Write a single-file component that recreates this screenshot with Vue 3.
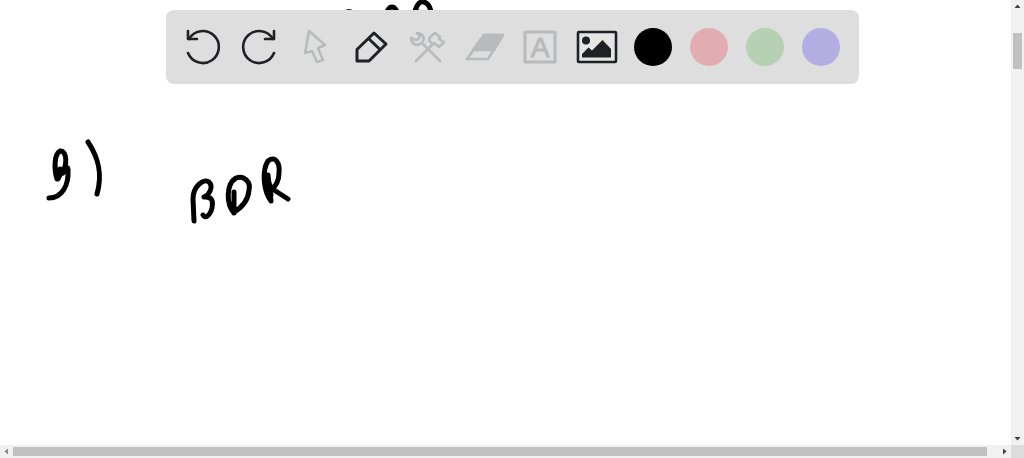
<script setup>
import { ref } from 'vue'

const active = ref('pen')
const tools = ['undo', 'redo', 'select', 'pen', 'tools', 'eraser', 'text', 'image']
const faded = ['select', 'tools', 'eraser', 'text']
const swatches = ['black', 'pink', 'green', 'violet']
</script>

<template>
  <div class="board">
    <main class="canvas">
      <svg class="ink" aria-label="Handwriting">
        <path d="M345 14Q349 9 353 14M386 15Q388 7 392 7T398 15M414 16C416 4 420 1 424 2S430 6 432 16M416 11L421 13" />
        <path d="M57 179C54 170 54 154 60 151C67 150 68 167 61 173L58 179L60 169L63 173Q68 164 68 170C69 185 62 198 49 198M57 170L59 176" />
        <path d="M88 142C98 157 103 173 97 194" />
        <path d="M194 221L193 199C193 186 204 178 209 182C214 187 209 195 204 197C213 196 213 202 212 208C210 216 205 219 203 215" />
        <path d="M234 192L234 213C226 204 226 184 236 178C244 175 251 182 249 190C248 202 241 208 234 212" />
        <path d="M268 175L271 201C263 190 262 170 268 161C276 155 280 164 279 173C279 183 274 188 270 191L267 176L270 186L274 190L288 199M267 180L271 195" />
      </svg>
    </main>

    <div class="toolbar" role="toolbar" aria-label="Drawing tools">
      <button
        v-for="t in tools"
        :key="t"
        type="button"
        class="tool"
        :class="{ faded: faded.includes(t) }"
        :aria-label="t"
        :aria-pressed="active === t"
        @click="active = t"
      >
        <svg class="icon" viewBox="-22 -22 44 44" aria-hidden="true">
          <g v-if="t === 'undo' || t === 'redo'" :transform="t === 'redo' ? 'scale(-1 1)' : undefined">
            <path d="M-15 6A16 16 0 1 0-14-8" />
            <path d="M-15-16V-8H-6" />
          </g>
          <path v-else-if="t === 'select'" d="M-6-16L10-2L3 1L8 13L2 15L-3 4L-10 6Z" />
          <path v-else-if="t === 'pen'" class="heavy" d="M3-14L15-3L-2 14H-14V2.500ZM-2.500-8.500L9 2.500" />
          <g v-else-if="t === 'tools'">
            <path d="M-11-14L-8-11Q-9-7-13-7L-17-9C-17-3-12-1-8-3L-6-4L12 14M-11-14C-6-14-3-10-5-6" />
            <path d="M-12 14L5-3M2-10L7-14L12-10L11-8L16-5L11 0L6-4L4-3L1-7Z" />
          </g>
          <g v-else-if="t === 'eraser'">
            <path d="M0-12H19L4 12H-17Z" />
            <path class="solid" d="M0-12H19L10 3H-11Z" />
          </g>
          <g v-else-if="t === 'text'">
            <rect class="heavy" x="-15" y="-15" width="30" height="30" />
            <text x="0" y="10" text-anchor="middle">A</text>
          </g>
          <g v-else>
            <rect class="photo" x="-18" y="-15" width="38" height="30" rx="1" />
            <circle class="solid dot" cx="-10" cy="-6.500" r="4" />
            <path class="solid dot" d="M-14 10.500V7L-7.500.500L-4 3.500L6.500-7L15 2V10.500Z" />
          </g>
        </svg>
      </button>
      <button
        v-for="s in swatches"
        :key="s"
        type="button"
        class="tool"
        :aria-label="s"
      >
        <span class="swatch" :class="s"></span>
      </button>
    </div>

    <div class="bar vertical">
      <svg class="arrow" viewBox="0 0 13 13"><path d="M3.500 8L6.500 4.500L9.500 8Z" /></svg>
      <div class="track"><div class="thumb"></div></div>
      <svg class="arrow" viewBox="0 0 13 13"><path d="M3.500 5H9.500L6.500 8.500Z" /></svg>
    </div>
    <div class="bar horizontal">
      <svg class="arrow dim" viewBox="0 0 13 13"><path d="M8 3.500V9.500L4.500 6.500Z" /></svg>
      <div class="track"><div class="thumb"></div></div>
      <svg class="arrow" viewBox="0 0 13 13"><path d="M5 3.500V9.500L8.500 6.500Z" /></svg>
    </div>
    <div class="corner"></div>
  </div>
</template>

<style>
body {
  margin: 0;
  background: #fff;
}
</style>

<style scoped>
.board {
  position: relative;
  display: grid;
  grid-template-columns: minmax(0, 1fr) 13px;
  grid-template-rows: minmax(0, 1fr) 13px;
  height: 100vh;
  overflow: hidden;
  background: #fff;
  font-family: "Liberation Sans", sans-serif;
}
.canvas {
  overflow: hidden;
}
.ink {
  display: block;
  width: 100%;
  height: 100%;
  fill: none;
  stroke: #000;
  stroke-width: 5px;
  stroke-linecap: round;
  stroke-linejoin: round;
}
.toolbar {
  position: absolute;
  top: 10px;
  left: 0;
  right: 0;
  box-sizing: border-box;
  display: grid;
  grid-template-columns: repeat(12, 1fr);
  max-width: 693px;
  margin: 0 auto;
  padding: 15px 9px;
  border-radius: 8px;
  background: #dedede;
}
.tool {
  display: flex;
  align-items: center;
  justify-content: center;
  height: 44px;
  padding: 0;
  border: 0;
  background: none;
  color: #202124;
  cursor: pointer;
}
.faded {
  color: #b9babb;
}
.icon {
  width: 44px;
  height: 44px;
  fill: none;
  stroke: currentColor;
  stroke-width: 2.6;
  stroke-linecap: round;
  stroke-linejoin: round;
}
.icon .heavy {
  stroke-width: 3px;
}
.icon .solid {
  fill: currentColor;
}
.icon .dot {
  stroke: none;
}
.icon .photo {
  fill: #e5e5e6;
}
.icon text {
  fill: currentColor;
  stroke-width: 1px;
  font-size: 28px;
}
.swatch {
  width: 38px;
  height: 38px;
  border-radius: 50%;
}
.black { background: #000; }
.pink { background: #e1adb2; }
.green { background: #b5d0b3; }
.violet { background: #b3aee1; }
.bar {
  display: flex;
  background: #f1f1f1;
}
.vertical {
  grid-column: 2;
  grid-row: 1;
  flex-direction: column;
}
.horizontal {
  grid-column: 1;
  grid-row: 2;
}
.track {
  flex: 1;
  display: flex;
}
.vertical .track {
  flex-direction: column;
  padding: 20px 2px 0;
}
.horizontal .track {
  padding: 2px 11px 2px 0;
}
.thumb {
  background: #c1c1c1;
}
.vertical .thumb {
  height: 36px;
}
.horizontal .thumb {
  flex: 1;
}
.arrow {
  flex: none;
  width: 13px;
  height: 13px;
  fill: #404040;
}
.dim {
  fill: #8a8a8a;
}
.corner {
  grid-column: 2;
  grid-row: 2;
  background: #dcdcdc;
}
</style>
